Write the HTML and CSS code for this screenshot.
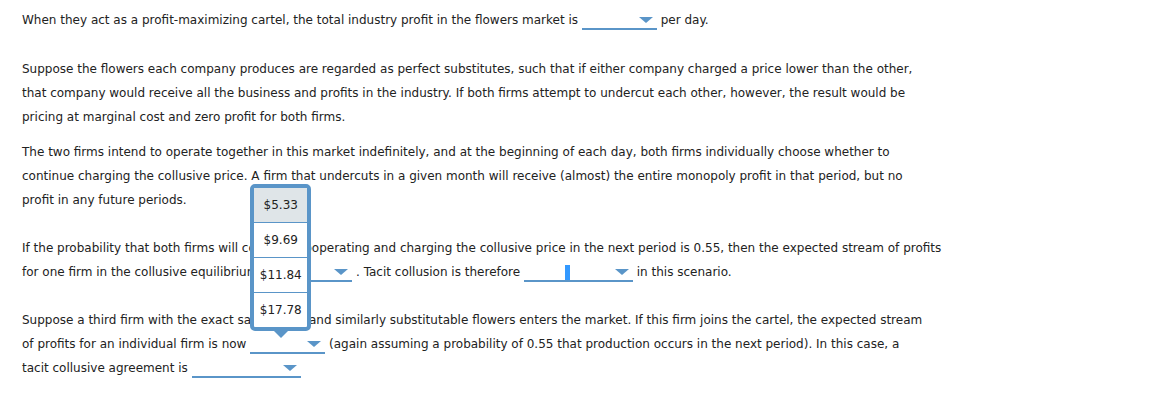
FILE: index.html
```html
<!DOCTYPE html>
<html>
<head>
<meta charset="utf-8">
<link rel="stylesheet" href="styles.css">
</head>
<body>
<div class="question">
  <p class="para p1">When they act as a profit-maximizing cartel, the total industry profit in the flowers market is <span class="dd w75"></span> per day.</p>
  <p class="para p2">Suppose the flowers each company produces are regarded as perfect substitutes, such that if either company charged a price lower than the other,<br>that company would receive all the business and profits in the industry. If both firms attempt to undercut each other, however, the result would be<br>pricing at marginal cost and zero profit for both firms.</p>
  <p class="para p3">The two firms intend to operate together in this market indefinitely, and at the beginning of each day, both firms individually choose whether to<br>continue charging the collusive price. A firm that undercuts in a given month will receive (almost) the entire monopoly profit in that period, but no<br>profit in any future periods.</p>
  <p class="para p4">If the probability that both firms will continue cooperating and charging the collusive price in the next period is 0.55, then the expected stream of profits<br>for one firm in the collusive equilibrium <span class="dd w90"></span> . Tacit collusion is therefore <span class="dd w110"><span class="caret"></span></span> in this scenario.</p>
  <p class="para p5">Suppose a third firm with the exact same costs and similarly substitutable flowers enters the market. If this firm joins the cartel, the expected stream<br>of profits for an individual firm is now <span class="dd w75 open"><span class="menu"><span class="opt active">$5.33</span><span class="opt">$9.69</span><span class="opt">$11.84</span><span class="opt">$17.78</span></span></span> (again assuming a probability of 0.55 that production occurs in the next period). In this case, a<br>tacit collusive agreement is <span class="dd w110"></span></p>
</div>
</body>
</html>
```

FILE: styles.css
```css
html, body {
  margin: 0;
  padding: 0;
  background: #ffffff;
}

body {
  font-family: "DejaVu Sans", Verdana, sans-serif;
  font-size: 12px;
  color: #222222;
}

.question {
  padding: 8px 0 0 22px;
  width: 1000px;
}

.para {
  margin: 0;
  line-height: 24px;
  white-space: nowrap;
}

.p2 { margin-top: 25px; }
.p3 { margin-top: 11px; }
.p4 { margin-top: 24px; }
.p5 { margin-top: 24px; }

.dd {
  display: inline-block;
  position: relative;
  height: 20px;
  border-bottom: 2px solid #5a95c8;
  vertical-align: top;
}

.dd::after {
  content: "";
  position: absolute;
  right: 4px;
  top: 9px;
  width: 0;
  height: 0;
  border-left: 7px solid transparent;
  border-right: 7px solid transparent;
  border-top: 6px solid #5a95c8;
}

.w75 { width: 75px; }
.w90 { width: 90px; }
.w110 { width: 109px; }

.caret {
  position: absolute;
  left: 41px;
  top: 5px;
  width: 5px;
  height: 15px;
  background: #3399ff;
}

.menu {
  position: absolute;
  left: 0;
  bottom: 21px;
  width: 53px;
  border: 4px solid #5a95c8;
  border-radius: 5px;
  background: #ffffff;
  display: flex;
  flex-direction: column;
  z-index: 5;
}

.menu::after {
  content: "";
  position: absolute;
  left: 50%;
  margin-left: -8px;
  top: calc(100% + 3px);
  width: 0;
  height: 0;
  border-left: 8px solid transparent;
  border-right: 8px solid transparent;
  border-top: 8px solid #5a95c8;
}

.opt {
  display: block;
  height: 34px;
  line-height: 34px;
  text-align: center;
  color: #222222;
  border-top: 1px solid #5a95c8;
}

.opt:first-child {
  border-top: none;
}

.opt.active {
  background: #dfe5e8;
}
```
